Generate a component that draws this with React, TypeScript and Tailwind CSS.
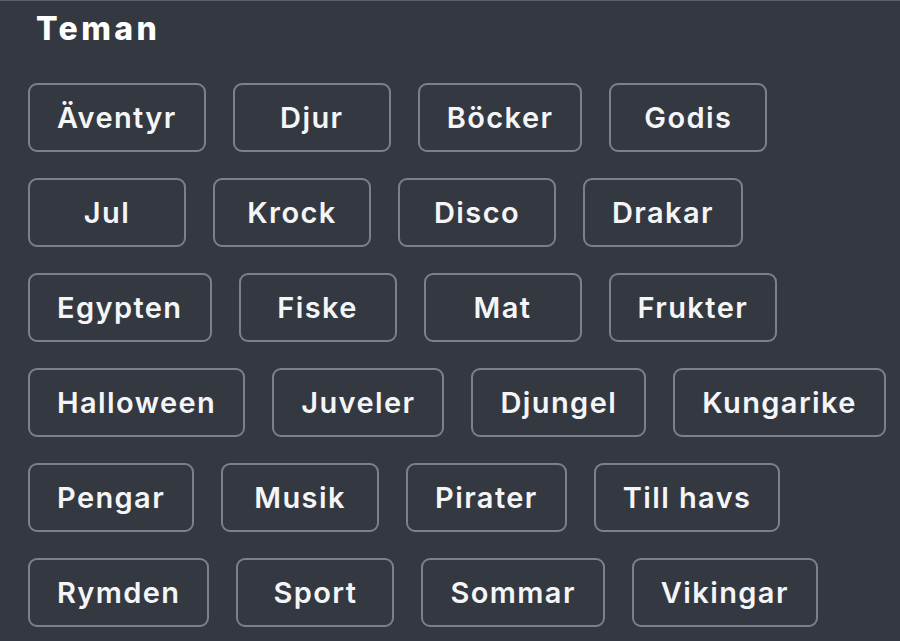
const rows: string[][] = [
  ["Äventyr", "Djur", "Böcker", "Godis"],
  ["Jul", "Krock", "Disco", "Drakar"],
  ["Egypten", "Fiske", "Mat", "Frukter"],
  ["Halloween", "Juveler", "Djungel", "Kungarike"],
  ["Pengar", "Musik", "Pirater", "Till havs"],
  ["Rymden", "Sport", "Sommar", "Vikingar"],
];

export default function App() {
  return (
    <div
      className="h-[641px] w-[900px] overflow-hidden border-t border-[#5b5f68] bg-[#343841] text-white"
      style={{ fontFamily: "Inter, 'Noto Sans', sans-serif" }}
    >
      <h2 className="ml-[36px] mt-[9px] text-[32px] font-extrabold leading-[38px] tracking-[3.4px]">Teman</h2>
      <div className="ml-[28px] mt-[35px] flex flex-col gap-[26px]">
        {rows.map((row, i) => (
          <div key={i} className="flex gap-[27px]">
            {row.map((label) => (
              <button
                key={label}
                className="h-[69px] min-w-[158px] rounded-[9px] border-2 border-[#7b818b] px-[27px] text-[29px] font-[560] tracking-[1.4px] text-[#f4f5f6]"
              >
                {label}
              </button>
            ))}
          </div>
        ))}
      </div>
    </div>
  );
}
